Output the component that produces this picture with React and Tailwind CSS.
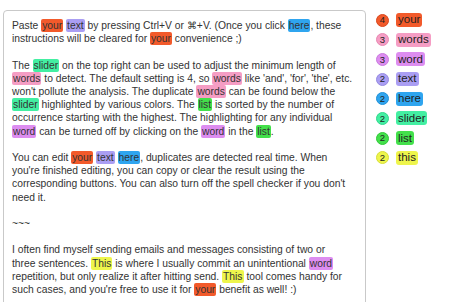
const C = {
  your: "bg-[#f25a2b]",
  text: "bg-[#aa9ef3]",
  here: "bg-[#2fa5ef]",
  slider: "bg-[#43efa2]",
  words: "bg-[#f59dc4]",
  list: "bg-[#43e04b]",
  word: "bg-[#dd8df0]",
  this: "bg-[#eef54c]",
};

const H = ({ w, children }) => (
  <span className={`${C[w]} rounded-[2px] px-[1px] py-[1px]`}>{children || w}</span>
);

const counts = [
  { w: "your", n: 4, ring: "border-[#d9461c]" },
  { w: "words", n: 3, ring: "border-[#e888b2]" },
  { w: "word", n: 3, ring: "border-[#c97ade]" },
  { w: "text", n: 2, ring: "border-[#968ae0]" },
  { w: "here", n: 2, ring: "border-[#1f90d8]" },
  { w: "slider", n: 2, ring: "border-[#2fd88c]" },
  { w: "list", n: 2, ring: "border-[#2fca38]" },
  { w: "this", n: 2, ring: "border-[#d8df38]" },
];

export default function App() {
  return (
    <div
      className="flex gap-[10px] pl-[3px] pt-[10px] bg-white text-[#333] h-[302px] overflow-hidden"
      style={{ fontFamily: '"Liberation Sans", Arial, sans-serif' }}
    >
      <div className="w-[363px] shrink-0 min-h-[320px] border border-[#c9c9c9] rounded-[4px] pl-[8px] pr-[9.5px] pt-[8px] flex flex-col gap-[13.2px] text-[10.3px] leading-[13.2px]">
        <p>
          Paste <H w="your" /> <H w="text" /> by pressing Ctrl+V or ⌘+V. (Once you click <H w="here" />, these
          instructions will be cleared for <H w="your" /> convenience ;)
        </p>
        <p>
          The <H w="slider" /> on the top right can be used to adjust the minimum length of <H w="words" /> to
          detect. The default setting is 4, so <H w="words" /> like 'and', 'for', 'the', etc. won't pollute the
          analysis. The duplicate <H w="words" /> can be found below the <H w="slider" /> highlighted by various
          colors. The <H w="list" /> is sorted by the number of occurrence starting with the highest. The
          highlighting for any individual <H w="word" /> can be turned off by clicking on the <H w="word" /> in
          the <H w="list" />.
        </p>
        <p>
          You can edit <H w="your" /> <H w="text" /> <H w="here" />, duplicates are detected real time. When
          you're finished editing, you can copy or clear the result using the corresponding buttons. You can
          also turn off the spell checker if you don't need it.
        </p>
        <p>~~~</p>
        <p>
          I often find myself sending emails and messages consisting of two or
          <br />
          three sentences. <H w="this">This</H> is where I usually commit an unintentional <H w="word" />{" "}
          repetition, but only realize it after hitting send. <H w="this">This</H> tool comes handy for such
          cases, and you're free to use it for <H w="your" /> benefit as well! :)
        </p>
      </div>
      <div className="flex flex-col gap-[5.7px] pt-[3px]">
        {counts.map((c) => (
          <div key={c.w} className="flex items-center gap-[7px] h-[14px]">
            <span
              className={`${C[c.w]} ${c.ring} border w-[13px] h-[13px] rounded-full flex items-center justify-center text-[9.5px] leading-none text-[#222]`}
            >
              {c.n}
            </span>
            <span className={`${C[c.w]} rounded-[3px] px-[2px] h-[14px] flex items-center text-[11.5px] text-[#222]`}>
              {c.w}
            </span>
          </div>
        ))}
      </div>
    </div>
  );
}
